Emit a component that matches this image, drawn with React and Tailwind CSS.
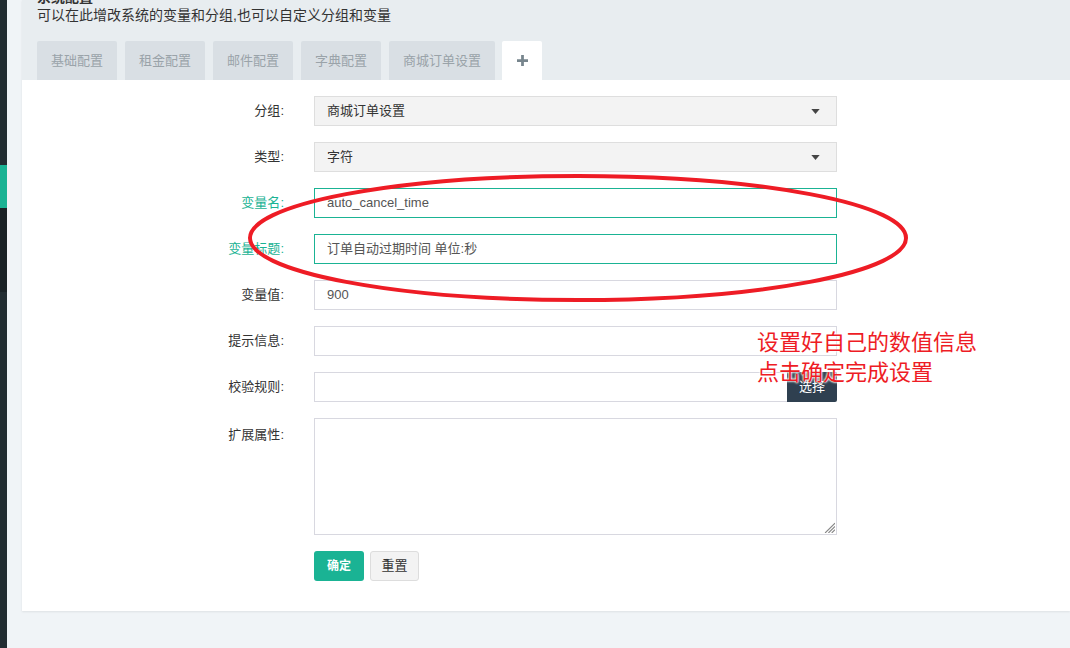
import React from "react";

const font = "font-['Liberation_Sans','Noto_Sans_CJK_SC',sans-serif]";

const tabs = ["基础配置", "租金配置", "邮件配置", "字典配置", "商城订单设置"];

const Caret = () => (
  <svg viewBox="0 0 10 6" className="w-[9px] h-[5px] fill-[#444]" aria-hidden="true">
    <path d="M0 0h10L5 6z" />
  </svg>
);

const Row = ({ label, active, top, children }) => (
  <div className={`flex ${top ? "items-start" : "items-center"} mb-4`}>
    <label
      className={`w-[262px] shrink-0 text-right text-[13px] ${top ? "pt-[7px]" : ""} ${
        active ? "text-[#1ab394]" : "text-[#333]"
      }`}
    >
      {label}:
    </label>
    <div className="ml-[30px] w-[523px]">{children}</div>
  </div>
);

const SelectBox = ({ value }) => (
  <div className="h-[30px] flex items-center justify-between px-3 bg-[#f3f3f3] border border-[#dedede] text-[13px] text-[#333]">
    <span>{value}</span>
    <span className="mr-1 flex">
      <Caret />
    </span>
  </div>
);

const TextBox = ({ value, active }) => (
  <div
    className={`h-[30px] flex items-center px-3 bg-white border text-[13px] text-[#555] ${
      active ? "border-[#1ab394]" : "border-[#d8d8e0]"
    }`}
  >
    {value}
  </div>
);

export default function App() {
  return (
    <div className={`relative w-[1070px] h-[648px] overflow-hidden flex bg-[#f0f4f7] ${font}`}>
      {/* sidebar edge */}
      <div className="w-[7px] shrink-0 flex flex-col bg-[#222d32]">
        <div className="h-[165px]" />
        <div className="h-[43px] bg-[#1ab394]" />
        <div className="h-[84px] bg-[#1a2226]" />
      </div>

      <div className="flex-1 pl-[15px] flex flex-col">
        <div className="bg-white shadow-[0_1px_2px_rgba(0,0,0,0.08)] flex flex-col">
          {/* header */}
          <div className="bg-[#e8edf0] pl-[15px]">
            <div className="-mt-[12px] text-[14px] font-bold text-[#333] leading-[18px]">系统配置</div>
            <div className="text-[14px] text-[#333] leading-[18px]">
              可以在此增改系统的变量和分组,也可以自定义分组和变量
            </div>
            <div className="flex gap-[8px] mt-[17px]">
              {tabs.map((t) => (
                <div
                  key={t}
                  className="h-[39px] px-[14px] flex items-center bg-[#d9dfe4] rounded-t-[2px] text-[13px] text-[#9aa3a9]"
                >
                  {t}
                </div>
              ))}
              <div className="h-[39px] w-[40px] flex items-center justify-center bg-white rounded-t-[2px] -ml-[1px]">
                <svg viewBox="0 0 12 12" className="w-[11px] h-[11px] fill-[#77858d]" aria-hidden="true">
                  <path d="M4.5 0h3v4.5H12v3H7.5V12h-3V7.5H0v-3h4.5z" />
                </svg>
              </div>
            </div>
          </div>

          {/* form body */}
          <div className="pt-[16px] pb-[30px]">
            <Row label="分组">
              <SelectBox value="商城订单设置" />
            </Row>
            <Row label="类型">
              <SelectBox value="字符" />
            </Row>
            <Row label="变量名" active>
              <TextBox value="auto_cancel_time" active />
            </Row>
            <Row label="变量标题" active>
              <TextBox value="订单自动过期时间 单位:秒" active />
            </Row>
            <Row label="变量值">
              <TextBox value="900" />
            </Row>
            <Row label="提示信息">
              <TextBox value="" />
            </Row>
            <Row label="校验规则">
              <div className="flex h-[30px]">
                <div className="flex-1 border border-[#d8d8e0] border-r-0" />
                <div className="w-[50px] bg-[#2f4050] text-white text-[13px] flex items-center justify-center rounded-r-[2px]">
                  选择
                </div>
              </div>
            </Row>
            <Row label="扩展属性" top>
              <div className="relative h-[117px] border border-[#d8d8e0]">
                <svg viewBox="0 0 10 10" className="absolute right-[1px] bottom-[1px] w-[11px] h-[11px] stroke-[#888]" aria-hidden="true">
                  <path d="M10 1L1 10M10 4L4 10M10 7L7 10" strokeWidth="1" />
                </svg>
              </div>
            </Row>
            <div className="flex ml-[292px] gap-[6px]">
              <button className="h-[30px] w-[50px] bg-[#1ab394] text-white text-[12px] font-bold rounded-[3px]">
                确定
              </button>
              <button className="h-[30px] w-[49px] bg-[#f3f3f3] border border-[#dddddd] text-[#333] text-[13px] rounded-[3px]">
                重置
              </button>
            </div>
          </div>
        </div>
      </div>

      {/* annotation overlay */}
      <svg className="absolute left-0 top-0 w-[1070px] h-[648px] pointer-events-none" viewBox="0 0 1070 648">
        <ellipse cx="578" cy="238" rx="328" ry="62" fill="none" stroke="#ee1c25" strokeWidth="4" />
      </svg>
      <div className="absolute left-[757px] top-[325px] text-[22px] leading-[30px] text-[#ee1c25] [text-shadow:0_0_2px_#fff,0_0_2px_#fff,0_0_3px_#fff] font-['Noto_Sans_CJK_SC',sans-serif]">
        <div>设置好自己的数值信息</div>
        <div>点击确定完成设置</div>
      </div>
    </div>
  );
}
